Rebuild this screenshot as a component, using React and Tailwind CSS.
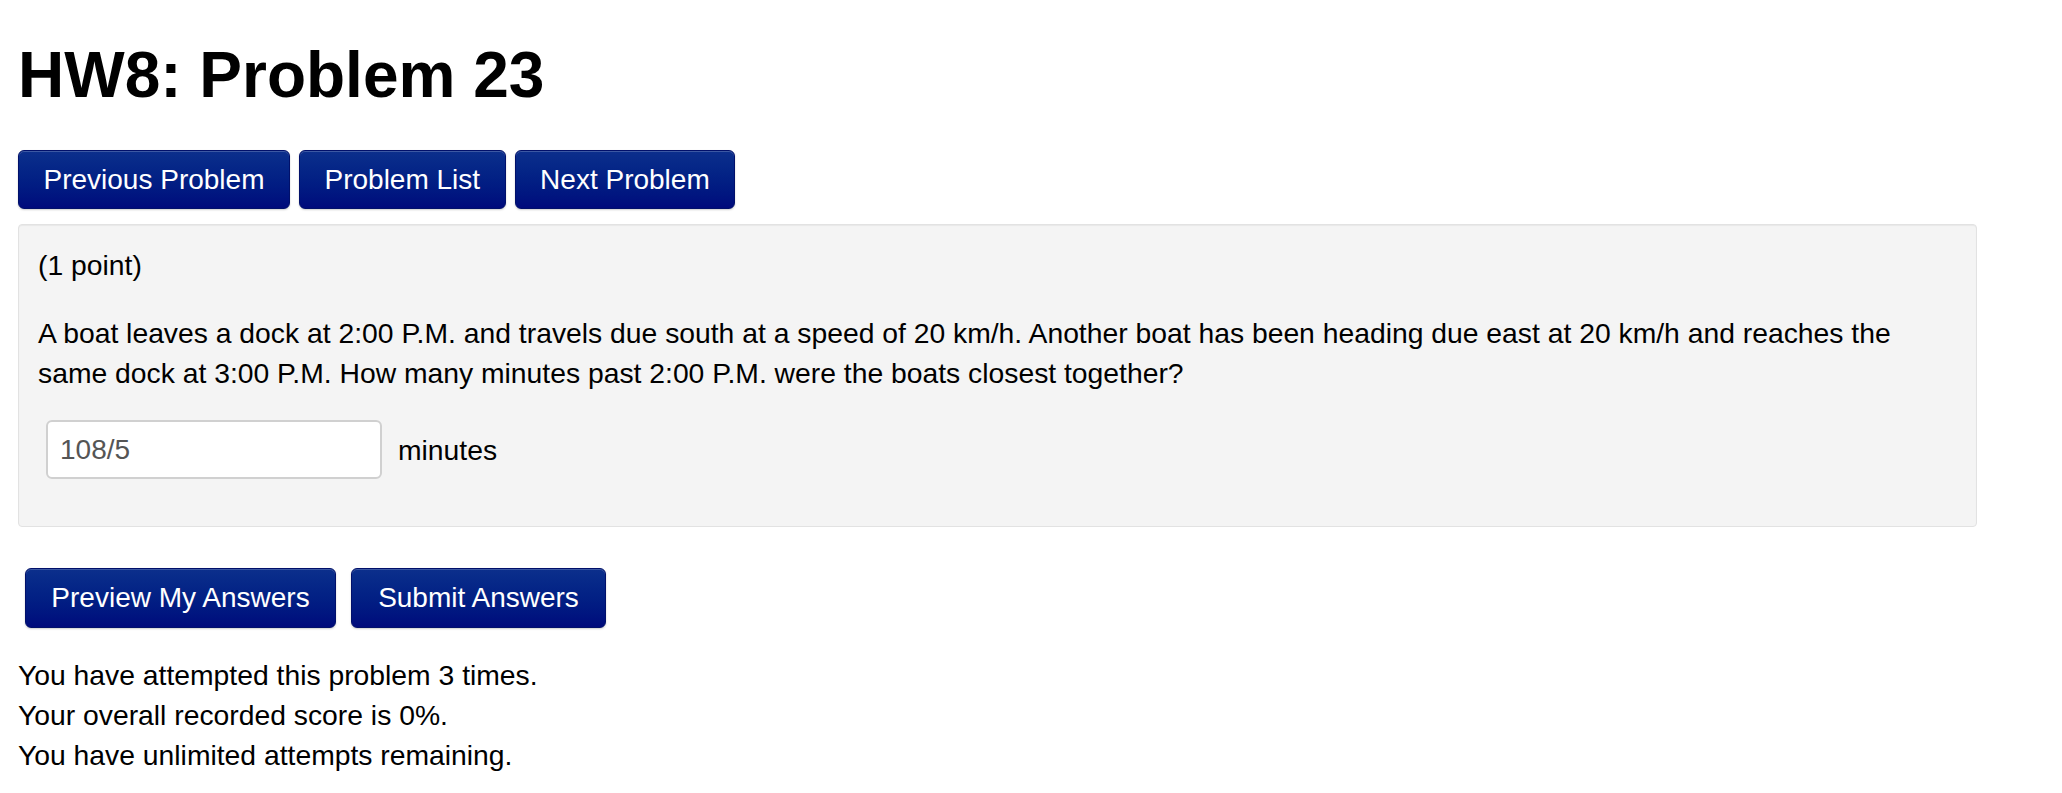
import React, { useState } from "react";

const navButtons = ["Previous Problem", "Problem List", "Next Problem"];

const statusLines = [
  "You have attempted this problem 3 times.",
  "Your overall recorded score is 0%.",
  "You have unlimited attempts remaining.",
];

// Bouton bleu foncé avec dégradé, style WeBWorK
const NavyButton = ({ children, className = "" }) => (
  <button
    className={`flex items-center justify-center rounded-[6px] border border-[#01106a] bg-gradient-to-b from-[#0c2f8c] to-[#000a7c] text-[28px] text-white shadow-[inset_0_1px_0_rgba(255,255,255,0.2),0_1px_2px_rgba(0,0,0,0.2)] ${className}`}
  >
    {children}
  </button>
);

const App = () => {
  const [answer, setAnswer] = useState("108/5");

  return (
    <div className="min-h-screen bg-white pl-[18px] font-['Liberation_Sans',Arial,sans-serif] text-black">
      <h1 className="pt-[43px] text-[64px] font-bold leading-[64px]">
        HW8: Problem 23
      </h1>

      {/* Navigation */}
      <div className="mt-[43px] flex gap-[9px]">
        {navButtons.map((label) => (
          <NavyButton key={label} className="h-[59px] px-[24.5px]">
            {label}
          </NavyButton>
        ))}
      </div>

      {/* Énoncé */}
      <div className="mt-[15px] w-[1959px] rounded-[4px] border border-[#e2e2e2] bg-[#f4f4f4] pb-[47px] pl-[19px] pr-[28px] pt-[20px] text-[28.3px] leading-[40px] shadow-[inset_0_1px_1px_rgba(0,0,0,0.05)]">
        <p>(1 point)</p>
        <p className="mt-[28px]">
          A boat leaves a dock at 2:00 P.M. and travels due south at a speed of
          20 km/h. Another boat has been heading due east at 20 km/h and
          reaches the same dock at 3:00 P.M. How many minutes past 2:00 P.M.
          were the boats closest together?
        </p>
        <div className="mt-[27px] flex items-center">
          <input
            value={answer}
            onChange={(e) => setAnswer(e.target.value)}
            className="ml-[8px] h-[59px] w-[336px] rounded-[6px] border-2 border-[#d0d0d0] bg-white px-[12px] text-[28px] text-[#555555] outline-none"
          />
          <span className="ml-[16px]">minutes</span>
        </div>
      </div>

      {/* Actions */}
      <div className="ml-[7px] mt-[41px] flex gap-[15px]">
        <NavyButton className="h-[60px] w-[311px]">Preview My Answers</NavyButton>
        <NavyButton className="h-[60px] w-[255px]">Submit Answers</NavyButton>
      </div>

      <div className="mt-[27px] text-[28.3px] leading-[40px]">
        {statusLines.map((line) => (
          <div key={line}>{line}</div>
        ))}
      </div>
    </div>
  );
};

export default App;
